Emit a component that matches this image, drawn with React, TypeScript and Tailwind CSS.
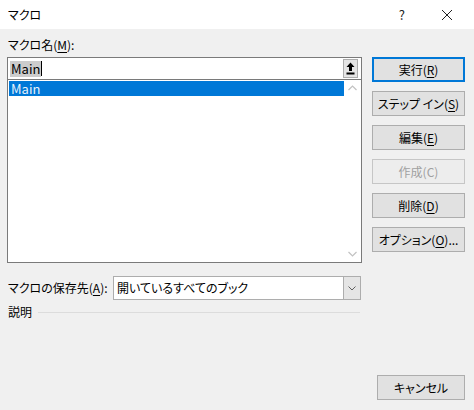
import { ReactNode } from 'react';

const font = { fontFamily: '"Noto Sans CJK JP", "Liberation Sans", sans-serif' };

const Btn = ({ children, def, disabled }: { children: ReactNode; def?: boolean; disabled?: boolean }) => (
  <div
    className={
      'h-[25px] w-[93px] flex items-center justify-center text-[12px] border ' +
      (def
        ? 'border-[#0078d7] bg-[#e1e1e1] shadow-[inset_0_0_0_1px_#0078d7] text-black'
        : disabled
          ? 'border-[#c6c6c6] bg-[#ededed] text-[#a0a0a0]'
          : 'border-[#adadad] bg-[#e1e1e1] text-black')
    }
  >
    {children}
  </div>
);

const U = ({ children }: { children: ReactNode }) => <span className="underline underline-offset-2">{children}</span>;

export default function App() {
  return (
    <div
      className="w-[474px] h-[410px] flex flex-col bg-white text-black [font-feature-settings:'palt'] overflow-hidden"
      style={font}
    >
      {/* Title bar */}
      <div className="h-[29px] flex items-center bg-white">
        <span className="ml-[8px] text-[12px]">マクロ</span>
        <span className="ml-auto mr-[36px] text-[13px] text-[#222]">?</span>
        <svg className="mr-[21px]" width="12" height="12" viewBox="0 0 12 12">
          <path d="M1 1 L11 11 M11 1 L1 11" stroke="#222" strokeWidth="1" />
        </svg>
      </div>

      {/* Body */}
      <div className="flex-1 flex flex-col bg-[#f0f0f0]">
        <div className="flex">
          {/* Left column */}
          <div className="ml-[7px] w-[355px] flex flex-col">
            <div className="h-[28px] pt-[6px] pl-[1px] text-[12px] leading-[20px]">
              マクロ名(<U>M</U>):
            </div>
            <div className="h-[22px] flex items-center bg-white border border-b-0 border-[#7a7a7a] pl-[2px]">
              <span className="bg-[#cccccc] text-[13px] leading-[16px] px-[1px]">Main</span>
              <span className="w-[1px] h-[15px] bg-black" />
              <div className="ml-auto mr-[3px] w-[15px] h-[19px] bg-[#e5e5e5] border border-[#adadad] flex items-center justify-center">
                <svg width="9" height="13" viewBox="0 0 9 13">
                  <path d="M4.5 0.5 L8.5 5 L6 5 L6 9 L3 9 L3 5 L0.5 5 Z" fill="#000" />
                  <rect x="0.5" y="10.5" width="8" height="2" fill="#000" />
                </svg>
              </div>
            </div>
            <div className="h-[184px] bg-white border border-[#7a7a7a] flex">
              <div className="flex-1 pt-[1px] pl-[1px]">
                <div className="h-[15px] bg-[#0078d7] text-[#e6f1fb] text-[13px] leading-[15px] pl-[2px]">Main</div>
              </div>
              <div className="w-[17px] flex flex-col items-center justify-between py-[5px]">
                <svg width="9" height="6" viewBox="0 0 9 6">
                  <path d="M0.5 5 L4.5 1 L8.5 5" stroke="#c2c2c2" fill="none" strokeWidth="1.2" />
                </svg>
                <svg width="9" height="6" viewBox="0 0 9 6">
                  <path d="M0.5 1 L4.5 5 L8.5 1" stroke="#c2c2c2" fill="none" strokeWidth="1.2" />
                </svg>
              </div>
            </div>
            <div className="mt-[13px] flex items-center">
              <div className="w-[106px] pl-[1px] text-[12px]">
                マクロの保存先(<U>A</U>):
              </div>
              <div className="w-[248px] h-[24px] flex bg-white border border-[#adadad]">
                <div className="flex-1 pl-[3px] text-[12px] leading-[22px]">開いているすべてのブック</div>
                <div className="w-[17px] bg-[#e5e5e5] border-l border-[#adadad] flex items-center justify-center">
                  <svg width="8" height="5" viewBox="0 0 8 5">
                    <path d="M0.5 0.5 L4 4 L7.5 0.5" stroke="#606060" fill="none" strokeWidth="1" />
                  </svg>
                </div>
              </div>
            </div>
            <div className="mt-[2px] h-[20px] flex items-center">
              <span className="pl-[1px] text-[12px]">説明</span>
              <div className="ml-[6px] flex-1 h-[1px] bg-[#dcdcdc] mr-[2px]" />
            </div>
          </div>

          {/* Right column */}
          <div className="ml-[10px] pt-[28px] flex flex-col gap-[9px]">
            <Btn def>実行(<U>R</U>)</Btn>
            <Btn>ステップ イン(<U>S</U>)</Btn>
            <Btn>編集(<U>E</U>)</Btn>
            <Btn disabled>作成(C)</Btn>
            <Btn>削除(<U>D</U>)</Btn>
            <Btn>オプション(<U>O</U>)...</Btn>
          </div>
        </div>

        <div className="mt-auto mb-[10px] mr-[9px] flex justify-end">
          <div className="h-[25px] w-[88px] flex items-center justify-center text-[12px] border border-[#adadad] bg-[#e1e1e1]">
            キャンセル
          </div>
        </div>
      </div>
    </div>
  );
}
